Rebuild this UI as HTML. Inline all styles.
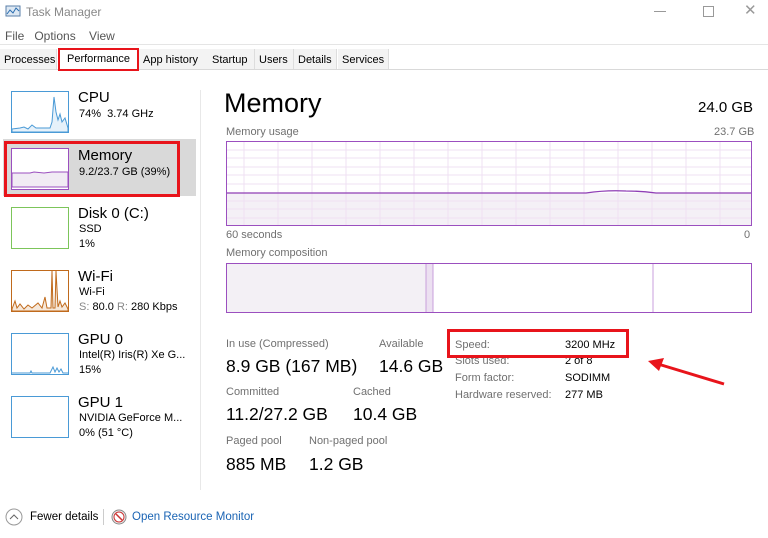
<!DOCTYPE html><html><head><style>
body{margin:0;width:768px;height:538px;background:#fff;font-family:"Liberation Sans",sans-serif;position:relative;overflow:hidden;color:#000}
.a{position:absolute;white-space:nowrap}
.g{color:#707070;font-size:11px}
.v{font-size:17.5px}
.tab{position:absolute;top:49px;height:20px;font-size:11px;line-height:22px;border-right:1px solid #ddd;padding:0 4px;background:#f3f3f3}
.thumb{position:absolute;left:11px;width:56px;height:40px;border:1px solid}
.t1{font-size:15px}.t2{font-size:11px}
</style></head><body>
<svg class="a" style="left:5px;top:5px" width="16" height="14"><rect x="1" y="1" width="14" height="10" fill="#dde8f3" stroke="#5a7fa8"/><path d="M2 9 L5 5 L8 8 L11 3 L14 6" stroke="#2a6db0" fill="none"/></svg>
<div class="a" style="left:26px;top:5px;font-size:12px;color:#888">Task Manager</div>
<div class="a" style="left:654px;top:11px;width:12px;border-top:1px solid #999"></div>
<div class="a" style="left:703px;top:6px;width:9px;height:9px;border:1px solid #999"></div>
<div class="a" style="left:744px;top:1px;font-size:15px;color:#999">✕</div>
<div class="a" style="left:5px;top:29px;font-size:12px;color:#555">File&nbsp;&nbsp;&nbsp;Options&nbsp;&nbsp;&nbsp;&nbsp;View</div>
<div class="a" style="left:0;top:44px;width:768px;border-top:1px solid #e5e5e5"></div>
<div class="a" style="left:0;top:69px;width:768px;border-top:1px solid #d9d9d9"></div>
<div class="tab" style="left:0;width:48px">Processes</div>
<div class="tab" style="left:139px;width:62px">App history</div>
<div class="tab" style="left:208px;width:38px">Startup</div>
<div class="tab" style="left:255px;width:30px">Users</div>
<div class="tab" style="left:294px;width:34px">Details</div>
<div class="tab" style="left:338px;width:42px">Services</div>
<div class="a" style="left:58px;top:48px;width:77px;height:19px;border:2px solid #e8141b;background:#fff;font-size:11px;line-height:19px;text-align:center">Performance</div>

<div class="a" style="left:200px;top:90px;height:400px;border-left:1px solid #e8e8e8"></div>
<svg class="thumb" style="top:91px;border-color:#4a9ad6" width="56" height="40"><path d="M0 37 L8 36 L12 35 L16 37 L20 33 L24 36 L38 36 L40 30 L42 5 L44 20 L46 28 L48 22 L50 30 L53 26 L56 36 L56 40 L0 40Z" fill="#e6f1fa" stroke="#4a9ad6"/></svg>
<div class="a t1" style="left:78px;top:89px">CPU</div>
<div class="a t2" style="left:79px;top:108px">74%&nbsp; 3.74 GHz</div>
<div class="a" style="left:3px;top:139px;width:193px;height:57px;background:#d9d9d9"></div>
<div class="a" style="left:4px;top:141px;width:170px;height:50px;border:3px solid #e8141b"></div>
<svg class="thumb" style="top:148px;border-color:#9b4fbf;background:#fff" width="56" height="38"><path d="M0 24 L18 24 L22 23 L32 24 L40 23 L56 23 L56 38 L0 38Z" fill="#f1ebf4" stroke="#9b4fbf"/></svg>
<div class="a t1" style="left:78px;top:147px">Memory</div>
<div class="a t2" style="left:79px;top:166px">9.2/23.7 GB (39%)</div>
<div class="thumb" style="top:207px;border-color:#7cc55a"></div>
<div class="a t1" style="left:78px;top:205px">Disk 0 (C:)</div>
<div class="a t2" style="left:79px;top:223px">SSD</div>
<div class="a t2" style="left:79px;top:238px">1%</div>
<svg class="thumb" style="top:270px;border-color:#c06a1c" width="56" height="40"><path d="M0 38 L3 30 L5 37 L8 33 L12 38 L16 34 L20 37 L26 32 L30 37 L33 26 L35 37 L39 37 L40 0 L41 37 L43 37 L44 0 L46 36 L48 30 L50 36 L53 32 L56 38 L56 40 L0 40Z" fill="#f6e8da" stroke="#c06a1c"/></svg>
<div class="a t1" style="left:78px;top:268px">Wi-Fi</div>
<div class="a t2" style="left:79px;top:286px">Wi-Fi</div>
<div class="a t2" style="left:79px;top:301px"><span style="color:#888">S:</span> 80.0 <span style="color:#888">R:</span> 280 Kbps</div>
<svg class="thumb" style="top:333px;border-color:#4a9ad6" width="56" height="40"><path d="M0 39 L18 39 L19 37 L20 39 L38 39 L41 33 L43 38 L45 34 L47 38 L49 35 L51 39 L56 39" fill="none" stroke="#4a9ad6"/></svg>
<div class="a t1" style="left:78px;top:331px">GPU 0</div>
<div class="a t2" style="left:79px;top:349px">Intel(R) Iris(R) Xe G...</div>
<div class="a t2" style="left:79px;top:364px">15%</div>
<div class="thumb" style="top:396px;border-color:#4a9ad6"></div>
<div class="a t1" style="left:78px;top:394px">GPU 1</div>
<div class="a t2" style="left:79px;top:412px">NVIDIA GeForce M...</div>
<div class="a t2" style="left:79px;top:427px">0% (51 °C)</div>

<div class="a" style="left:224px;top:88px;font-size:27px">Memory</div>
<div class="a" style="left:698px;top:99px;font-size:15px">24.0 GB</div>
<div class="a g" style="left:226px;top:126px">Memory usage</div>
<div class="a g" style="left:714px;top:126px">23.7 GB</div>
<svg class="a" style="left:226px;top:141px" width="526" height="85">
<rect x="0" y="52" width="526" height="33" fill="#f4f0f6"/>
<g stroke="#efe0f3" stroke-width="1">
<path d="M0 9H526M0 17H526M0 26H526M0 34H526M0 43H526M0 60H526M0 68H526M0 77H526"/>
<path d="M18 0V85M52 0V85M86 0V85M120 0V85M154 0V85M188 0V85M222 0V85M256 0V85M290 0V85M324 0V85M358 0V85M392 0V85M426 0V85M460 0V85M494 0V85"/>
</g>
<path d="M0 52H360 Q380 49 400 50 Q415 50 430 52H526" stroke="#8f3fb5" fill="none" stroke-width="1.3"/>
<rect x="0.5" y="0.5" width="525" height="84" fill="none" stroke="#9b4fbf"/>
</svg>
<div class="a g" style="left:226px;top:229px">60 seconds</div>
<div class="a g" style="left:744px;top:229px">0</div>
<div class="a g" style="left:226px;top:247px">Memory composition</div>
<svg class="a" style="left:226px;top:263px" width="526" height="50">
<rect x="0" y="0" width="200" height="50" fill="#f3f0f5"/>
<rect x="200" y="0" width="7" height="50" fill="#ece0f1"/>
<path d="M200 0V50M207 0V50M427 0V50" stroke="#c99fdc"/>
<rect x="0.5" y="0.5" width="525" height="49" fill="none" stroke="#9b4fbf"/>
</svg>

<div class="a g" style="left:226px;top:338px">In use (Compressed)</div>
<div class="a g" style="left:379px;top:338px">Available</div>
<div class="a v" style="left:226px;top:356px">8.9 GB (167 MB)</div>
<div class="a v" style="left:379px;top:356px">14.6 GB</div>
<div class="a g" style="left:226px;top:386px">Committed</div>
<div class="a g" style="left:353px;top:386px">Cached</div>
<div class="a v" style="left:226px;top:404px">11.2/27.2 GB</div>
<div class="a v" style="left:353px;top:404px">10.4 GB</div>
<div class="a g" style="left:226px;top:435px">Paged pool</div>
<div class="a g" style="left:309px;top:435px">Non-paged pool</div>
<div class="a v" style="left:226px;top:454px">885 MB</div>
<div class="a v" style="left:309px;top:454px">1.2 GB</div>

<div class="a g" style="left:455px;top:339px">Speed:</div>
<div class="a" style="left:565px;top:339px;font-size:11px">3200 MHz</div>
<div class="a g" style="left:455px;top:355px">Slots used:</div>
<div class="a" style="left:565px;top:355px;font-size:11px">2 of 8</div>
<div class="a g" style="left:455px;top:372px">Form factor:</div>
<div class="a" style="left:565px;top:372px;font-size:11px">SODIMM</div>
<div class="a g" style="left:455px;top:389px">Hardware reserved:</div>
<div class="a" style="left:565px;top:389px;font-size:11px">277 MB</div>
<div class="a" style="left:447px;top:329px;width:176px;height:23px;border:3px solid #e8141b"></div>
<svg class="a" style="left:640px;top:355px" width="90" height="35"><path d="M84 29 L18 9" stroke="#e8141b" stroke-width="3"/><path d="M8 6 L24 3 L19 16Z" fill="#e8141b"/></svg>

<svg class="a" style="left:5px;top:508px" width="18" height="18"><circle cx="9" cy="9" r="8" fill="none" stroke="#999"/><path d="M5 11 L9 7 L13 11" fill="none" stroke="#666"/></svg>
<div class="a" style="left:30px;top:511px;font-size:11.5px">Fewer details</div>
<div class="a" style="left:103px;top:509px;height:16px;border-left:1px solid #ccc"></div>
<svg class="a" style="left:111px;top:509px" width="16" height="16"><circle cx="8" cy="8" r="7" fill="#eee" stroke="#888"/><circle cx="8" cy="8" r="5" fill="#fff" stroke="#c33"/><path d="M5 5 L11 11" stroke="#c33" stroke-width="1.5"/></svg>
<div class="a" style="left:132px;top:511px;font-size:11.5px;color:#1a64b4">Open Resource Monitor</div>
</body></html>
